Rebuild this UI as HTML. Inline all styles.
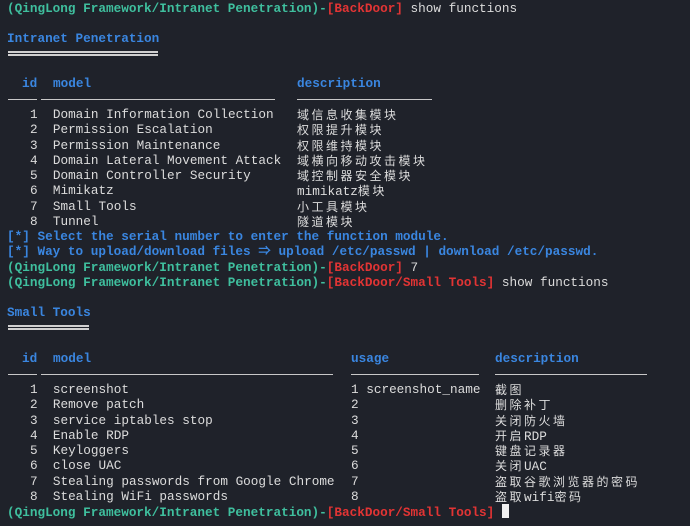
<!DOCTYPE html>
<html><head><meta charset="utf-8"><style>
body{margin:0;width:690px;height:525px;background:#1f222a;overflow:hidden;position:relative;font-family:"Liberation Mono","Noto Sans CJK SC",monospace;font-size:12.7px;color:#dcdcdc}
#w{position:absolute;left:0;top:1px;width:690px;height:525px}
.l{position:absolute;white-space:pre;line-height:15px;height:15px}
.g{color:#3fbf9e;font-weight:bold}
.r{color:#e23434;font-weight:bold}
.b{color:#3a86e0;font-weight:bold}
.c{letter-spacing:2.5px;font-family:"Noto Sans CJK SC",sans-serif;font-size:12px}
.hr{position:absolute;height:1px;background:#c8c8c8}
.dr{position:absolute;border-top:2px solid #d0d0d0;border-bottom:2px solid #d0d0d0;height:1px}
</style></head><body><div id="w">
<div class="l" style="left:7px;top:0"><span class="g">(QingLong Framework/Intranet Penetration)-</span><span class="r">[BackDoor]</span> show functions</div>
<div class="l b" style="left:7px;top:30px">Intranet Penetration</div>
<div class="dr" style="left:8px;top:50px;width:150px"></div>

<div class="l b" style="left:22px;top:75px">id</div>
<div class="l b" style="left:53px;top:75px">model</div>
<div class="l b" style="left:297px;top:75px">description</div>
<div class="hr" style="left:8px;top:98px;width:29px"></div>
<div class="hr" style="left:41px;top:98px;width:234px"></div>
<div class="hr" style="left:297px;top:98px;width:135px"></div>

<div class="l" style="left:30px;top:106px">1  Domain Information Collection</div><div class="l c" style="left:297px;top:106px">域信息收集模块</div>
<div class="l" style="left:30px;top:121px">2  Permission Escalation</div><div class="l c" style="left:297px;top:121px">权限提升模块</div>
<div class="l" style="left:30px;top:137px">3  Permission Maintenance</div><div class="l c" style="left:297px;top:137px">权限维持模块</div>
<div class="l" style="left:30px;top:152px">4  Domain Lateral Movement Attack</div><div class="l c" style="left:297px;top:152px">域横向移动攻击模块</div>
<div class="l" style="left:30px;top:167px">5  Domain Controller Security</div><div class="l c" style="left:297px;top:167px">域控制器安全模块</div>
<div class="l" style="left:30px;top:182px">6  Mimikatz</div><div class="l" style="left:297px;top:182px">mimikatz<span class="c">模块</span></div>
<div class="l" style="left:30px;top:198px">7  Small Tools</div><div class="l c" style="left:297px;top:198px">小工具模块</div>
<div class="l" style="left:30px;top:213px">8  Tunnel</div><div class="l c" style="left:297px;top:213px">隧道模块</div>

<div class="l b" style="left:7px;top:228px">[*] Select the serial number to enter the function module.</div>
<div class="l b" style="left:7px;top:243px">[*] Way to upload/download files ⇒ upload /etc/passwd | download /etc/passwd.</div>
<div class="l" style="left:7px;top:259px"><span class="g">(QingLong Framework/Intranet Penetration)-</span><span class="r">[BackDoor]</span> 7</div>
<div class="l" style="left:7px;top:274px"><span class="g">(QingLong Framework/Intranet Penetration)-</span><span class="r">[BackDoor/Small Tools]</span> show functions</div>
<div class="l b" style="left:7px;top:304px">Small Tools</div>
<div class="dr" style="left:8px;top:324px;width:81px"></div>

<div class="l b" style="left:22px;top:350px">id</div>
<div class="l b" style="left:53px;top:350px">model</div>
<div class="l b" style="left:351px;top:350px">usage</div>
<div class="l b" style="left:495px;top:350px">description</div>
<div class="hr" style="left:8px;top:373px;width:29px"></div>
<div class="hr" style="left:41px;top:373px;width:292px"></div>
<div class="hr" style="left:351px;top:373px;width:128px"></div>
<div class="hr" style="left:495px;top:373px;width:152px"></div>

<div class="l" style="left:30px;top:381px">1  screenshot</div><div class="l" style="left:351px;top:381px">1 screenshot_name</div><div class="l c" style="left:495px;top:381px">截图</div>
<div class="l" style="left:30px;top:396px">2  Remove patch</div><div class="l" style="left:351px;top:396px">2</div><div class="l c" style="left:495px;top:396px">删除补丁</div>
<div class="l" style="left:30px;top:412px">3  service iptables stop</div><div class="l" style="left:351px;top:412px">3</div><div class="l c" style="left:495px;top:412px">关闭防火墙</div>
<div class="l" style="left:30px;top:427px">4  Enable RDP</div><div class="l" style="left:351px;top:427px">4</div><div class="l" style="left:495px;top:427px"><span class="c">开启</span>RDP</div>
<div class="l" style="left:30px;top:442px">5  Keyloggers</div><div class="l" style="left:351px;top:442px">5</div><div class="l c" style="left:495px;top:442px">键盘记录器</div>
<div class="l" style="left:30px;top:457px">6  close UAC</div><div class="l" style="left:351px;top:457px">6</div><div class="l" style="left:495px;top:457px"><span class="c">关闭</span>UAC</div>
<div class="l" style="left:30px;top:473px">7  Stealing passwords from Google Chrome</div><div class="l" style="left:351px;top:473px">7</div><div class="l c" style="left:495px;top:473px">盗取谷歌浏览器的密码</div>
<div class="l" style="left:30px;top:488px">8  Stealing WiFi passwords</div><div class="l" style="left:351px;top:488px">8</div><div class="l" style="left:495px;top:488px"><span class="c">盗取</span>wifi<span class="c">密码</span></div>

<div class="l" style="left:7px;top:503px"><span class="g">(QingLong Framework/Intranet Penetration)-</span><span class="r">[BackDoor/Small Tools]</span> <span style="display:inline-block;width:7px;height:14px;background:#f0f0f0;vertical-align:-2px"></span></div>
</div></body></html>
